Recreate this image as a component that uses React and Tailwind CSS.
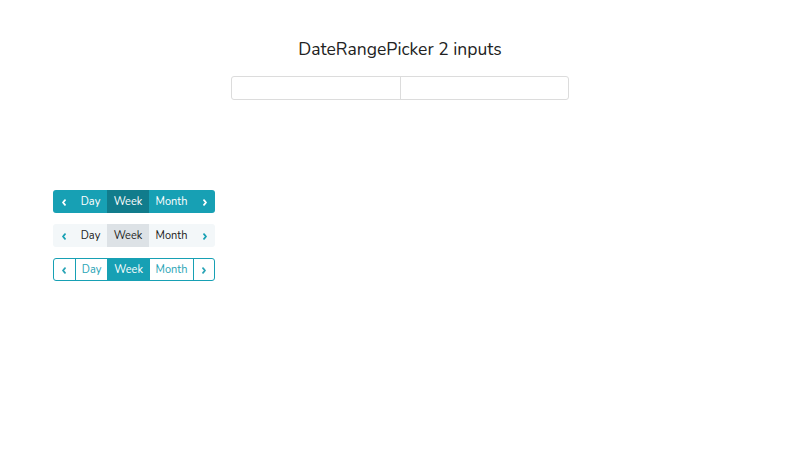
import React from "react";

const Chev = ({ dir, className }) => (
  <svg width="6" height="7" viewBox="0 0 6 7" className={className}>
    <path
      d={dir === "l" ? "M4 1.2 L2 3.5 L4 5.8" : "M2 1.2 L4 3.5 L2 5.8"}
      fill="none"
      stroke="currentColor"
      strokeWidth="1.8"
      strokeLinecap="round"
      strokeLinejoin="round"
    />
  </svg>
);

function Group({ variant }) {
  const segs = [
    { k: "prev", w: "w-[21px]" },
    { k: "Day", w: "w-[33px]" },
    { k: "Week", w: "w-[42px]", active: true },
    { k: "Month", w: "w-[45px]" },
    { k: "next", w: "w-[21px]" },
  ];
  if (variant === "solid") {
    return (
      <div className="flex h-[23px] w-[162px] rounded-[3px] overflow-hidden bg-[#17a0b4] text-white text-[11px]">
        {segs.map((s) => (
          <div
            key={s.k}
            className={`${s.w} pt-px flex items-center justify-center ${s.active ? "bg-[#117c8c]" : ""}`}
          >
            {s.k === "prev" ? <Chev dir="l" /> : s.k === "next" ? <Chev dir="r" /> : s.k}
          </div>
        ))}
      </div>
    );
  }
  if (variant === "light") {
    return (
      <div className="flex h-[23px] w-[162px] rounded-[3px] overflow-hidden bg-[#f3f7f9] text-[#222] text-[11px]">
        {segs.map((s) => (
          <div
            key={s.k}
            className={`${s.w} pt-px flex items-center justify-center ${s.active ? "bg-[#dde2e6]" : ""}`}
          >
            {s.k === "prev" ? (
              <Chev dir="l" className="text-[#17a0b4]" />
            ) : s.k === "next" ? (
              <Chev dir="r" className="text-[#17a0b4]" />
            ) : (
              s.k
            )}
          </div>
        ))}
      </div>
    );
  }
  return (
    <div className="flex h-[23px] w-[162px] rounded-[3px] overflow-hidden border border-[#17a0b4] text-[#2aa4b6] text-[11px]">
      {segs.map((s, i) => (
        <div
          key={s.k}
          className={`${s.w} pt-px flex items-center justify-center ${i > 0 ? "border-l border-[#17a0b4]" : ""} ${
            s.active ? "bg-[#17a0b4] text-white" : ""
          }`}
        >
          {s.k === "prev" ? <Chev dir="l" /> : s.k === "next" ? <Chev dir="r" /> : s.k}
        </div>
      ))}
    </div>
  );
}

export default function App() {
  return (
    <div
      className="w-[800px] h-[450px] bg-white text-[#222] flex flex-col"
      style={{ fontFamily: "'Nunito', Lato, 'Noto Sans', sans-serif" }}
    >
      <h1 className="mt-[36px] text-center text-[17.5px] leading-[26px] text-[#222]">
        DateRangePicker 2 inputs
      </h1>
      <div className="mt-[14px] mx-auto flex w-[338px] h-[24px] rounded-[3px] border border-[#dcdcdc]">
        <div className="flex-1 border-r border-[#dcdcdc]" />
        <div className="flex-1" />
      </div>
      <div className="mt-[90px] ml-[53px] flex flex-col gap-[11px]">
        <Group variant="solid" />
        <Group variant="light" />
        <Group variant="outline" />
      </div>
    </div>
  );
}
